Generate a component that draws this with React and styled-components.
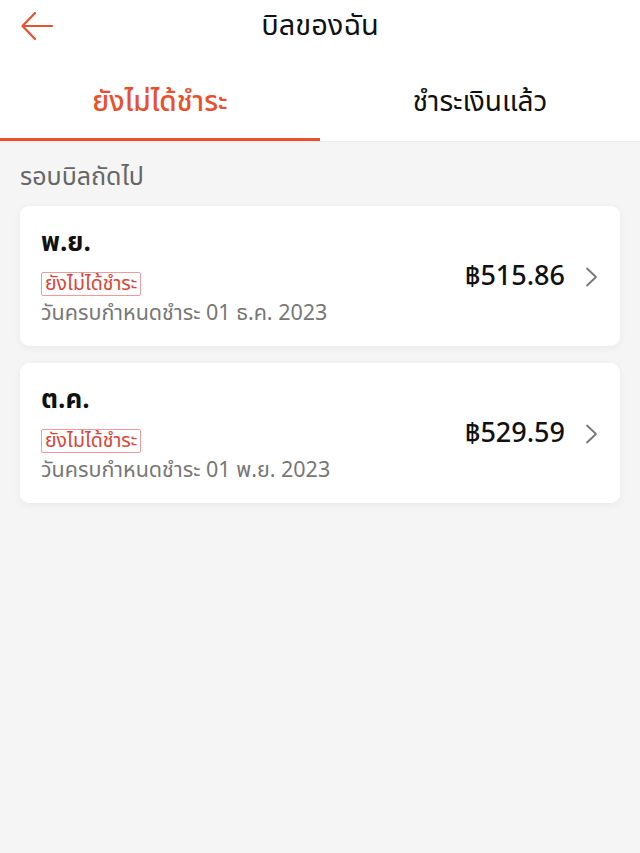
import React from 'react'
import styled, { createGlobalStyle } from 'styled-components'

const GlobalStyle = createGlobalStyle`
  html, body {
    margin: 0;
    padding: 0;
    background: #f5f5f5;
  }
  body {
    font-family: "Noto Sans Thai", "Noto Sans", Roboto, "DejaVu Sans", sans-serif;
    color: #111;
  }
`

const Page = styled.div`
  width: 640px;
  min-height: 853px;
  background: #f5f5f5;
`
const Header = styled.div`
  height: 52px;
  background: #fff;
  display: grid;
  grid-template-columns: 80px 1fr 80px;
  align-items: center;
`
const BackButton = styled.div`
  padding-left: 21px;
  display: flex;
  align-items: center;
`
const HeaderTitle = styled.div`
  text-align: center;
  font-size: 29px;
  line-height: 40px;
  color: #111;
`
const Tabs = styled.div`
  display: flex;
  background: #fff;
  border-bottom: 1px solid #ececec;
`
const Tab = styled.div`
  flex: 1;
  height: 89px;
  display: flex;
  align-items: center;
  justify-content: center;
  font-size: 28px;
  font-weight: ${(p) => (p.active ? 500 : 400)};
  color: ${(p) => (p.active ? '#e9512e' : '#111')};
  border-bottom: 3px solid ${(p) => (p.active ? '#e9512e' : 'transparent')};
  box-sizing: border-box;
  padding-top: 14px;
`
const SectionLabel = styled.div`
  padding: 18px 20px 12px;
  font-size: 25px;
  line-height: 34px;
  color: #666;
`
const List = styled.div`
  display: flex;
  flex-direction: column;
  gap: 17px;
  padding: 0 20px;
`
const Card = styled.div`
  background: #fff;
  border-radius: 9px;
  box-shadow: 0 2px 8px rgba(0, 0, 0, 0.05);
  display: flex;
  align-items: center;
  padding: 22px 22px 19px 21px;
`
const Info = styled.div`
  flex: 1;
  display: flex;
  flex-direction: column;
  align-items: flex-start;
`
const Month = styled.div`
  font-size: 26px;
  font-weight: 700;
  line-height: 30px;
  margin-bottom: 14px;
`
const Badge = styled.div`
  border: 1px solid #f29a9a;
  border-radius: 2px;
  color: #dc4436;
  font-size: 19.5px;
  line-height: 22px;
  padding: 0 3px;
  margin-bottom: 5px;
`
const DueDate = styled.div`
  font-size: 21.5px;
  color: #777;
  line-height: 26px;
`
const Amount = styled.div`
  font-size: 27px;
  font-weight: 500;
  color: #111;
  margin-right: 20px;
  margin-top: -2px;
`
const Chevron = styled.div`
  display: flex;
  align-items: center;
  margin-top: -2px;
`

const bills = [
  { month: 'พ.ย.', due: 'วันครบกำหนดชำระ 01 ธ.ค. 2023', amount: '฿515.86' },
  { month: 'ต.ค.', due: 'วันครบกำหนดชำระ 01 พ.ย. 2023', amount: '฿529.59' },
]

const App = () => {
  return (
    <Page>
      <GlobalStyle />
      <Header>
        <BackButton>
          <svg width="32" height="28" viewBox="0 0 32 28" fill="none">
            <path d="M31 14H2M14 1L1.5 14L14 27" stroke="#e9512e" strokeWidth="2.2" strokeLinecap="round" strokeLinejoin="round" />
          </svg>
        </BackButton>
        <HeaderTitle>บิลของฉัน</HeaderTitle>
        <div />
      </Header>
      <Tabs>
        <Tab active>ยังไม่ได้ชำระ</Tab>
        <Tab>ชำระเงินแล้ว</Tab>
      </Tabs>
      <SectionLabel>รอบบิลถัดไป</SectionLabel>
      <List>
        {bills.map((bill) => (
          <Card key={bill.month}>
            <Info>
              <Month>{bill.month}</Month>
              <Badge>ยังไม่ได้ชำระ</Badge>
              <DueDate>{bill.due}</DueDate>
            </Info>
            <Amount>{bill.amount}</Amount>
            <Chevron>
              <svg width="13" height="20" viewBox="0 0 13 20" fill="none">
                <path d="M2 1.5L11 10L2 18.5" stroke="#777" strokeWidth="1.8" strokeLinecap="round" strokeLinejoin="round" />
              </svg>
            </Chevron>
          </Card>
        ))}
      </List>
    </Page>
  )
}

export default App
